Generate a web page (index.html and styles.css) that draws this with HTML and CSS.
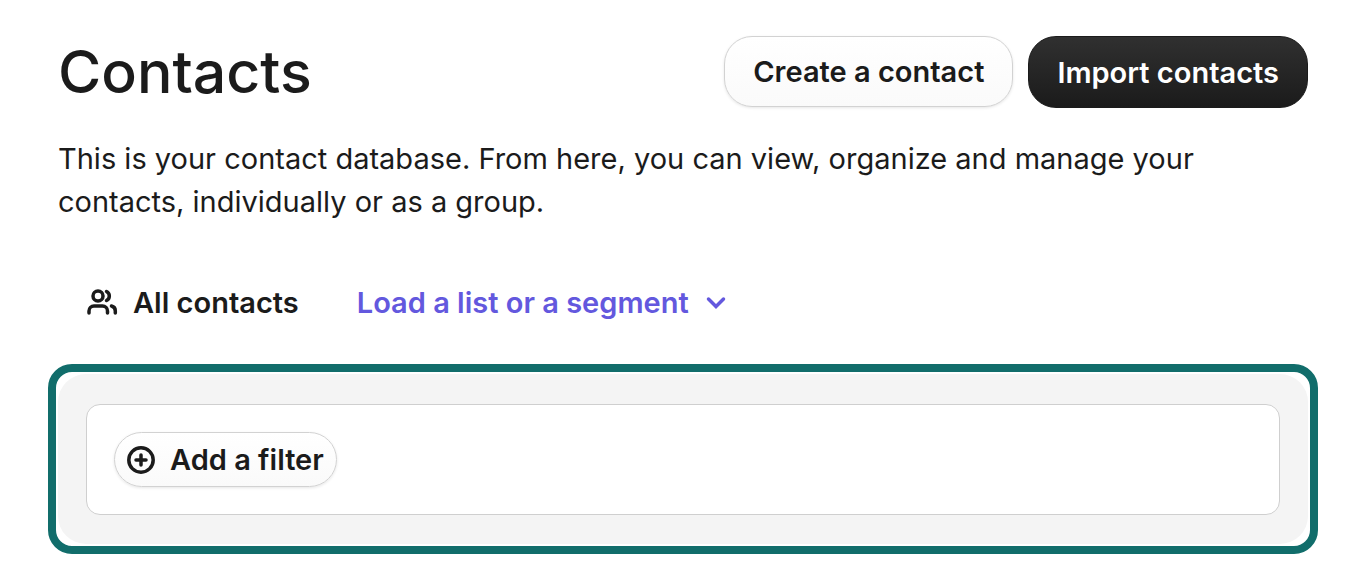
FILE: index.html
```html
<!DOCTYPE html>
<html lang="en">
<head>
    <meta charset="UTF-8">
    <title>Contacts</title>
    <link rel="stylesheet" href="styles.css">
</head>
<body>
    <main class="page">
        <header class="page-header">
            <h1>Contacts</h1>
            <div class="actions">
                <button type="button" class="btn btn-light">Create a contact</button>
                <button type="button" class="btn btn-dark">Import contacts</button>
            </div>
        </header>
        <p class="intro">This is your contact database. From here, you can view, organize and manage your contacts, individually or as a group.</p>

        <nav class="views">
            <a href="#" class="view view-current">
                <svg class="icon-people" viewBox="0 0 32 32" aria-hidden="true">
                    <circle cx="12" cy="9" r="5"/>
                    <path d="M3 26v-2a5 5 0 0 1 5-5h8.500a5 5 0 0 1 5 5v2"/>
                    <path d="M20.500 4.500a5 5 0 0 1 0 9M25.500 19a5 5 0 0 1 3.800 5v2"/>
                </svg>
                All contacts
            </a>
            <button type="button" class="view view-load">
                Load a list or a segment
                <svg class="icon-chevron" viewBox="0 0 20 20" aria-hidden="true">
                    <path d="M2.500 6l7.500 7.500 7.500-7.500"/>
                </svg>
            </button>
        </nav>

        <section class="highlight">
            <div class="filters">
                <div class="filter-box">
                    <button type="button" class="btn btn-light btn-filter">
                        <svg class="icon-plus" viewBox="0 0 28 28" aria-hidden="true">
                            <circle cx="14" cy="14" r="12.200"/>
                            <path d="M14 9v10M9 14h10"/>
                        </svg>
                        Add a filter
                    </button>
                </div>
            </div>
        </section>
    </main>
</body>
</html>
```
FILE: styles.css
```css
* { box-sizing: border-box; }
body {
    margin: 0;
    background: #fff;
    color: #1b1b1b;
    font-family: Inter, "Liberation Sans", sans-serif;
    font-size: 29px;
}
.page { padding: 36px 48px 28px; }

.page-header {
    display: flex;
    justify-content: space-between;
    align-items: center;
    padding: 0 10px;
}
h1 {
    margin: 0;
    font-size: 59px;
    font-weight: 500;
    line-height: 72px;
}
.actions {
    display: flex;
    align-items: flex-start;
    gap: 15px;
}

.btn {
    height: 72px;
    padding: 0 28px;
    border: 1px solid #d2d2d2;
    border-radius: 28px;
    font: inherit;
    font-weight: 600;
    cursor: pointer;
}
.btn-light {
    height: 71px;
    background: linear-gradient(#fff, #fafafa);
    color: #1b1b1b;
    box-shadow: 0 1px 3px rgba(0, 0, 0, 0.1);
}
.btn-dark {
    background: linear-gradient(#303030, #1b1b1b);
    border-color: #1b1b1b;
    color: #fff;
}

.intro {
    margin: 29px 10px 0;
    line-height: 43px;
}

.views {
    display: flex;
    align-items: center;
    gap: 58px;
    margin: 59px 38px 0;
}
.view {
    display: flex;
    align-items: center;
    padding: 0;
    border: none;
    background: none;
    color: #1b1b1b;
    font: inherit;
    font-weight: 600;
    line-height: 42px;
    text-decoration: none;
    cursor: pointer;
}
.view-current { gap: 15px; }
.view-load { gap: 17px; color: #6358de; }

svg {
    fill: none;
    stroke: currentColor;
    stroke-width: 3.5;
    stroke-linecap: round;
}
.icon-people { width: 32px; height: 32px; }
.icon-chevron { width: 20px; height: 20px; }
.icon-plus { width: 28px; height: 28px; }

.highlight {
    margin-top: 40px;
    padding: 2px;
    border: 8px solid #116d6b;
    border-radius: 24px;
}
.filters {
    padding: 30px 28px 29px;
    border-radius: 28px;
    background: #f4f4f4;
}
.filter-box {
    padding: 27px;
    border: 1px solid #cfcfcf;
    border-radius: 14px;
    background: #fff;
}
.btn-filter {
    display: flex;
    align-items: center;
    gap: 15px;
    height: 55px;
    padding: 0 12px;
}
```
